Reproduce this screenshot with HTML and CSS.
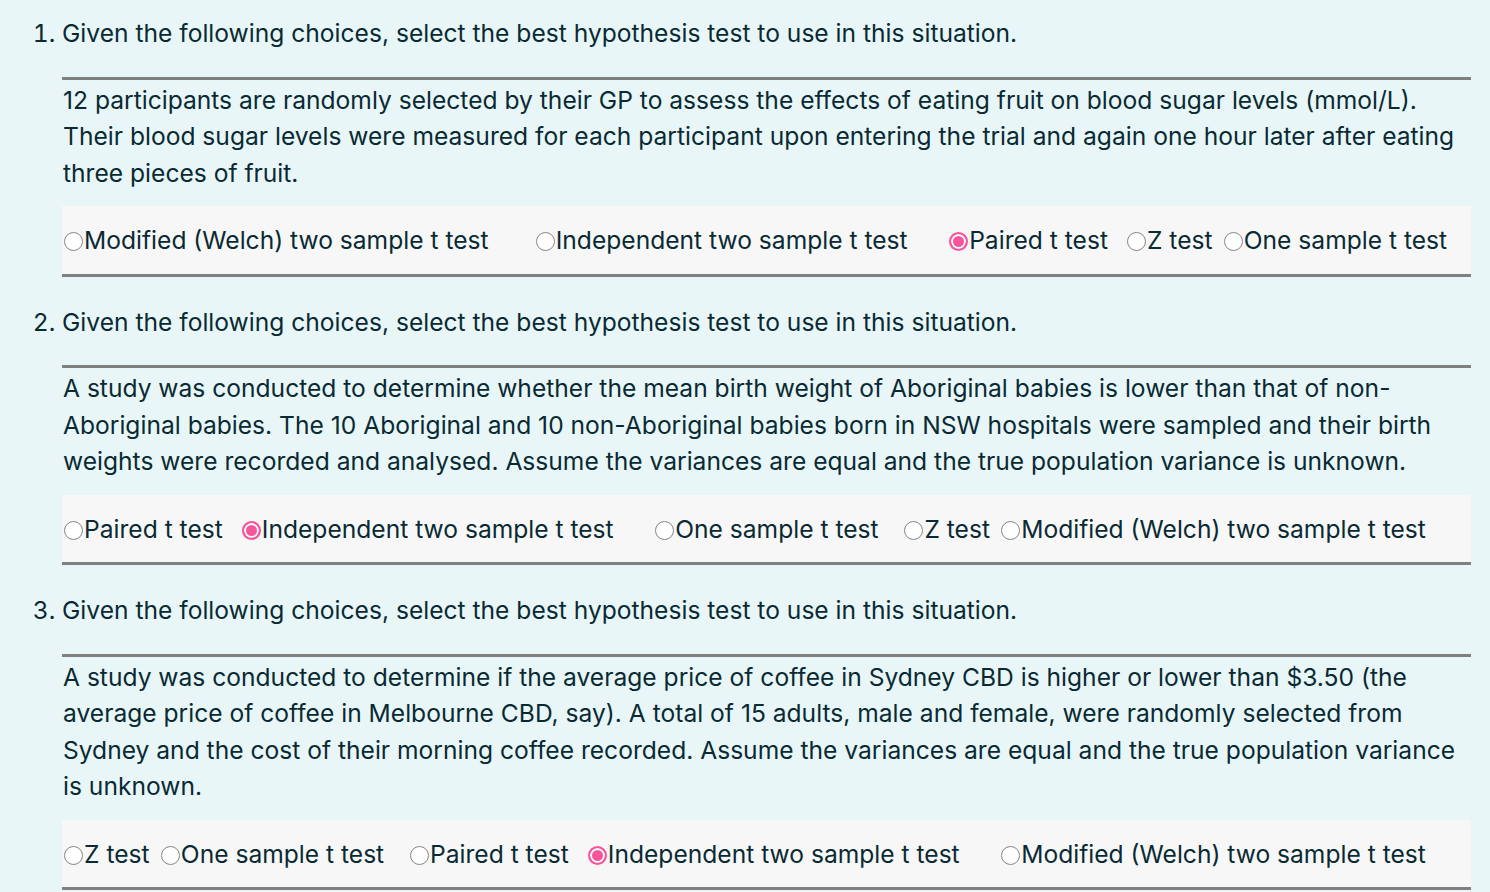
FILE: index.html
```html
<!DOCTYPE html>
<html lang="en">
<head>
<meta charset="utf-8">
<title>Hypothesis tests</title>
<link rel="stylesheet" href="styles.css">
</head>
<body>
<ol class="quiz">
  <li class="question">
    <div class="prompt">Given the following choices, select the best hypothesis test to use in this situation.</div>
    <div class="card">
      <p class="scenario">12 participants are randomly selected by their GP to assess the effects of eating fruit on blood sugar levels (mmol/L). Their blood sugar levels were measured for each participant upon entering the trial and again one hour later after eating three pieces of fruit.</p>
      <div class="options">
        <label class="option"><input type="radio" name="q1">Modified (Welch) two sample t test</label>
        <label class="option"><input type="radio" name="q1">Independent two sample t test</label>
        <label class="option"><input type="radio" name="q1" checked>Paired t test</label>
        <label class="option"><input type="radio" name="q1">Z test</label>
        <label class="option"><input type="radio" name="q1">One sample t test</label>
      </div>
    </div>
  </li>
  <li class="question">
    <div class="prompt">Given the following choices, select the best hypothesis test to use in this situation.</div>
    <div class="card">
      <p class="scenario">A study was conducted to determine whether the mean birth weight of Aboriginal babies is lower than that of non-Aboriginal babies. The 10 Aboriginal and 10 non-Aboriginal babies born in NSW hospitals were sampled and their birth weights were recorded and analysed. Assume the variances are equal and the true population variance is unknown.</p>
      <div class="options">
        <label class="option"><input type="radio" name="q2">Paired t test</label>
        <label class="option"><input type="radio" name="q2" checked>Independent two sample t test</label>
        <label class="option"><input type="radio" name="q2">One sample t test</label>
        <label class="option"><input type="radio" name="q2">Z test</label>
        <label class="option"><input type="radio" name="q2">Modified (Welch) two sample t test</label>
      </div>
    </div>
  </li>
  <li class="question">
    <div class="prompt">Given the following choices, select the best hypothesis test to use in this situation.</div>
    <div class="card">
      <p class="scenario">A study was conducted to determine if the average price of coffee in Sydney CBD is higher or lower than $3.50 (the average price of coffee in Melbourne CBD, say). A total of 15 adults, male and female, were randomly selected from Sydney and the cost of their morning coffee recorded. Assume the variances are equal and the true population variance is unknown.</p>
      <div class="options">
        <label class="option"><input type="radio" name="q3">Z test</label>
        <label class="option"><input type="radio" name="q3">One sample t test</label>
        <label class="option"><input type="radio" name="q3">Paired t test</label>
        <label class="option"><input type="radio" name="q3" checked>Independent two sample t test</label>
        <label class="option"><input type="radio" name="q3">Modified (Welch) two sample t test</label>
      </div>
    </div>
  </li>
</ol>
</body>
</html>
```
FILE: styles.css
```css
html, body {
  margin: 0;
  padding: 0;
  background: #e8f6f7;
}
body {
  font-family: Inter, "Noto Sans", "Liberation Sans", sans-serif;
  font-size: 24.6px;
  line-height: 36.5px;
  color: #0a2a33;
}
.quiz {
  margin: 0;
  padding: 15px 19px 0 62px;
}
.question {
  margin: 0 0 27px 0;
}
.prompt {
  margin: 0;
}
.card {
  margin-top: 25px;
  border-top: 3px solid #808080;
}
.scenario {
  margin: 0;
  padding: 2px 0 0 1px;
}
.options {
  display: table;
  width: 100%;
  margin-top: 15px;
  padding: 16px 0 15px 0;
  background: #f7f7f7;
  border-bottom: 3px solid #808080;
  box-sizing: border-box;
}
.option {
  display: table-cell;
  white-space: nowrap;
  padding-left: 2px;
}
.option input {
  appearance: none;
  -webkit-appearance: none;
  width: 19px;
  height: 19px;
  margin: 0 1px 0 0;
  border: 1.5px solid #858585;
  border-radius: 50%;
  background: #fff;
  vertical-align: -2px;
  box-sizing: border-box;
}
.option input:checked {
  border: 2px solid #f5559b;
  background: #f5559b;
  box-shadow: inset 0 0 0 2px #fff;
}
```
